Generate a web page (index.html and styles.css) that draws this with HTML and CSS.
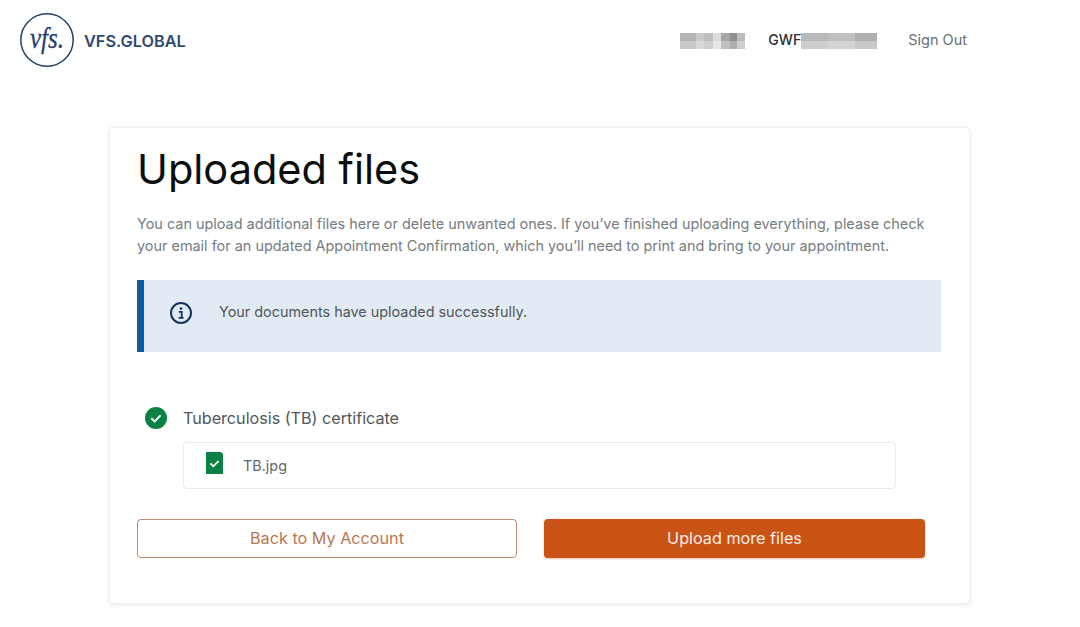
FILE: index.html
```html
<!DOCTYPE html>
<html lang="en">
<head>
<meta charset="utf-8">
<title>Uploaded files</title>
<link rel="stylesheet" href="styles.css">
</head>
<body>
<header class="topbar">
  <a class="brand" href="#">
    <svg class="brand-mark" viewBox="0 0 56 56" width="56" height="56" aria-hidden="true">
      <circle cx="28" cy="28" r="26.2" fill="none" stroke="#24406a" stroke-width="1.5"/>
      <text x="11" y="36" textLength="34" lengthAdjust="spacingAndGlyphs" class="brand-script">vfs.</text>
    </svg>
    <span class="brand-name">VFS.GLOBAL</span>
  </a>
  <nav class="usernav">
    <span class="redact redact-name"></span>
    <span class="ref"><span class="ref-code">GWF</span><span class="redact redact-ref"></span></span>
    <a class="signout" href="#">Sign Out</a>
  </nav>
</header>
<main class="card">
  <h1 class="title">Uploaded files</h1>
  <p class="intro">You can upload additional files here or delete unwanted ones. If you’ve finished uploading everything, please check your email for an updated Appointment Confirmation, which you’ll need to print and bring to your appointment.</p>
  <div class="notice">
    <svg class="notice-icon" viewBox="0 0 24 24" width="24" height="24" aria-hidden="true">
      <circle cx="12" cy="12" r="10" fill="none" stroke="#16335f" stroke-width="2"/>
      <circle cx="12" cy="7.6" r="1.3" fill="#16335f"/>
      <path d="M9.8 10.8h2.9v5.6M9.6 16.8h5" fill="none" stroke="#16335f" stroke-width="1.8"/>
    </svg>
    <p class="notice-text">Your documents have uploaded successfully.</p>
  </div>
  <section class="doc">
    <div class="doc-head">
      <svg class="doc-check" viewBox="0 0 22 22" width="22" height="22" aria-hidden="true">
        <circle cx="11" cy="11" r="11" fill="#0b8243"/>
        <path d="M6.4 11.2l3.2 3.2 6-6" fill="none" stroke="#fff" stroke-width="2"/>
      </svg>
      <span class="doc-name">Tuberculosis (TB) certificate</span>
    </div>
    <div class="file">
      <svg class="file-icon" viewBox="0 0 17 22" width="17" height="22" aria-hidden="true">
        <path d="M0 0h15l2 2v20H0z" fill="#0b8243"/>
        <path d="M4.4 11.4l2.9 2.9 5.2-5.2" fill="none" stroke="#fff" stroke-width="1.8"/>
      </svg>
      <span class="file-name">TB.jpg</span>
    </div>
  </section>
  <div class="actions">
    <a class="btn btn-outline" href="#">Back to My Account</a>
    <a class="btn btn-solid" href="#">Upload more files</a>
  </div>
</main>
</body>
</html>
```
FILE: styles.css
```css
* { box-sizing: border-box; }
html, body { margin: 0; padding: 0; }
body {
  width: 1080px;
  height: 627px;
  overflow: hidden;
  background: #fff;
  font-family: Inter, "Liberation Sans", sans-serif;
  color: #4b5257;
}
a { text-decoration: none; color: inherit; }
p { margin: 0; }

.topbar {
  height: 127px;
  padding: 12px 113px 0 19px;
  display: flex;
  justify-content: space-between;
  align-items: flex-start;
}
.brand { display: flex; align-items: center; gap: 9px; height: 56px; }
.brand-mark { display: block; }
.brand-script {
  font-family: "Liberation Serif", serif;
  font-style: italic;
  font-size: 30px;
  fill: #24406a;
  stroke: #24406a;
  stroke-width: 0.3px;
}
.brand-name {
  font-size: 16.3px;
  font-weight: 600;
  color: #2d4a72;
  margin-top: 1px;
}
.usernav {
  display: flex;
  align-items: center;
  height: 54px;
  font-size: 14.5px;
}
.redact { display: block; height: 16px; margin-top: 4px; filter: blur(0.6px); }
.redact-name {
  width: 65px;
  margin-right: 23px;
  background:
    linear-gradient(to bottom, rgba(255,255,255,0) 50%, rgba(255,255,255,.28) 50%),
    linear-gradient(to right, #b5b5b5 0 16px, #cbcbcb 16px 24px, #bdbdbd 24px 33px, #dcdcdc 33px 41px, #a6a6a6 41px 50px, #909090 50px 57px, #bcbcbc 57px 65px);
}
.ref { display: flex; align-items: center; }
.ref-code { font-size: 14.1px; font-weight: 500; color: #2a2f33; }
.redact-ref {
  width: 76px;
  background:
    linear-gradient(to bottom, rgba(255,255,255,0) 50%, rgba(255,255,255,.3) 50%),
    linear-gradient(to right, #b9b9b9 0 27px, #c0c0c0 27px 54px, #b0b0b0 54px 76px);
}
.signout { margin-left: 31px; color: #6a6f73; }

.card {
  width: 861px;
  height: 477px;
  margin-left: 109px;
  padding: 17px 27px 0;
  background: #fff;
  border: 1px solid #eeefef;
  border-radius: 4px;
  box-shadow: 0 1px 5px rgba(0,0,0,.09);
}
.title {
  margin: 0;
  font-size: 41.5px;
  line-height: 48px;
  font-weight: 400;
  color: #0a0c0e;
}
.intro {
  margin-top: 20px;
  width: 800px;
  font-size: 14.43px;
  line-height: 22px;
  color: #767c81;
}
.notice {
  margin-top: 23px;
  width: 804px;
  height: 72px;
  display: flex;
  align-items: flex-start;
  background: #e2ebf3;
  border-left: 7px solid #0a5ea6;
}
.notice-icon { margin: 21px 0 0 25px; flex: none; }
.notice-text {
  margin: 22px 0 0 26px;
  font-size: 14.4px;
  line-height: 20px;
  color: #4f555a;
}
.doc { margin-top: 55px; }
.doc-head { display: flex; align-items: center; height: 22px; padding-left: 8px; }
.doc-name { margin-left: 16px; font-size: 16.15px; color: #50565b; }
.file {
  margin: 13px 0 0 46px;
  width: 713px;
  height: 47px;
  display: flex;
  align-items: center;
  border: 1px solid #e8eaeb;
  border-radius: 4px;
  padding-left: 22px;
}
.file-icon { flex: none; margin-top: -5px; }
.file-name { margin-left: 20px; font-size: 14.4px; color: #62686d; }
.actions { display: flex; gap: 27px; margin-top: 30px; }
.btn {
  height: 39px;
  padding-bottom: 2px;
  display: flex;
  align-items: center;
  justify-content: center;
  border-radius: 4px;
  font-size: 16.2px;
}
.btn-outline {
  width: 380px;
  background: #fff;
  border: 1px solid #bd8a72;
  color: #b97650;
}
.btn-solid {
  width: 381px;
  background: #c95215;
  color: #fbeee6;
  box-shadow: 0 1px 2px rgba(200,90,30,.4);
}
```
